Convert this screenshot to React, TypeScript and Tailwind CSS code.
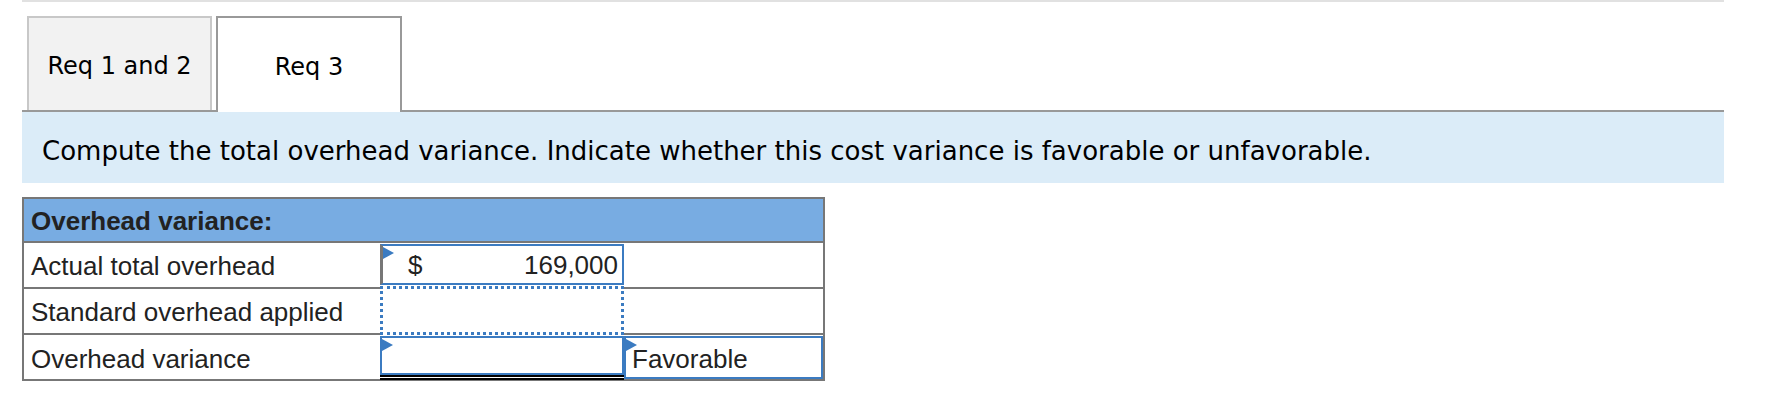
import React from "react";

const blue = "border-[#3b7bc1]";

const Flag: React.FC = () => (
  <svg
    className="absolute left-0 top-[1px]"
    width="11"
    height="12"
    viewBox="0 0 11 12"
  >
    <polygon points="0,0 11,6 0,12" fill="#3b7bc1" />
  </svg>
);

const App: React.FC = () => {
  return (
    <div className="min-h-[402px] bg-white pl-[22px]">
      <div className="w-[1702px] border-t-2 border-[#e1e1e1]">
        {/* TABS */}
        <div className="flex items-end gap-[4px] pl-[5px] pt-[14px] border-b-2 border-[#999999] font-['DejaVu_Sans',sans-serif] text-[24px] text-black">
          <div className="w-[185px] h-[94px] flex items-center justify-center pt-[4px] bg-[#f2f2f2] border-2 border-b-0 border-[#c8c8c8]">
            Req 1 and 2
          </div>
          <div className="relative -mb-[2px] w-[186px] h-[96px] flex items-center justify-center pt-[3px] bg-white border-2 border-b-0 border-[#999999]">
            <span>Req 3</span>
          </div>
        </div>

        {/* INSTRUCTION */}
        <div className="h-[71px] flex items-center pl-[20px] pt-[7px] bg-[#dbecf8] font-['DejaVu_Sans',sans-serif] text-[26px] text-black">
          Compute the total overhead variance. Indicate whether this cost
          variance is favorable or unfavorable.
        </div>

        {/* TABLE */}
        <div className="mt-[14px] w-[803px] border-2 border-[#777777] font-['Liberation_Sans',Arial,sans-serif] text-[26px] text-[#222222]">
          <div className="h-[44px] flex items-center pl-[7px] pt-[2px] bg-[#78ace2] border-b-2 border-[#777777] font-bold">
            Overhead variance:
          </div>

          <div className="grid grid-cols-[356px_244px_199px]">
            {/* row 1 */}
            <div className="h-[46px] flex items-center pl-[7px] pt-[2px] border-b-2 border-[#777777]">
              Actual total overhead
            </div>
            <div className="h-[46px] pt-[1px]">
              <div className={`relative h-[41px] flex items-center justify-between pl-[25px] pr-[4px] pt-[2px] border-2 border-l-[3px] ${blue} border-l-[#777777]`}>
                <Flag />
                <span>$</span>
                <span>169,000</span>
              </div>
            </div>
            <div className="h-[46px] border-b-2 border-[#777777]" />

            {/* row 2 */}
            <div className="h-[46px] flex items-center pl-[7px] pt-[2px] border-b-2 border-[#777777]">
              Standard overhead applied
            </div>
            <div className="h-[46px] -mt-[3px]">
              <div className={`h-[49px] border-[3px] border-dotted ${blue}`} />
            </div>
            <div className="h-[46px] border-b-2 border-[#777777]" />

            {/* row 3 */}
            <div className="h-[44px] flex items-center pl-[7px] pt-[4px]">
              Overhead variance
            </div>
            <div className="h-[44px] pt-[1px]">
              <div className="border-b-[5px] border-double border-black">
                <div className={`relative h-[39px] border-2 ${blue}`}>
                  <Flag />
                </div>
              </div>
            </div>
            <div className="h-[44px] pt-[1px]">
              <div className={`relative h-[43px] flex items-center pl-[6px] pt-[4px] border-2 ${blue}`}>
                <Flag />
                <span>Favorable</span>
              </div>
            </div>
          </div>
        </div>
      </div>
    </div>
  );
};

export default App;
